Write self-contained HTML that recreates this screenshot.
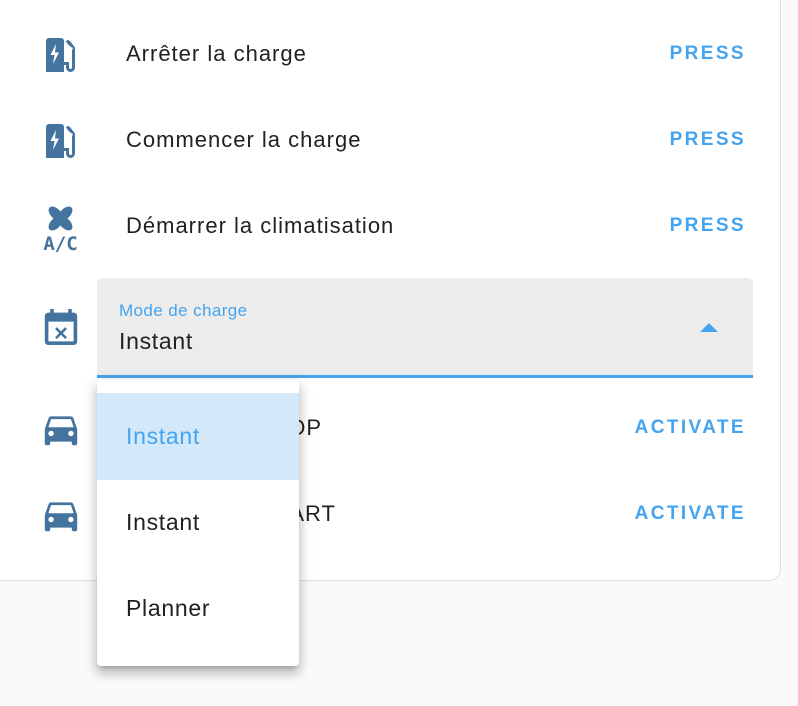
<!DOCTYPE html>
<html><head><meta charset="utf-8"><style>
*{margin:0;padding:0;box-sizing:border-box}
body{width:798px;height:706px;background:#fafafa;font-family:"Liberation Sans",sans-serif;position:relative;overflow:hidden}
.card{position:absolute;left:-20px;top:-20px;width:801px;height:601px;background:#fff;border:1px solid #e0e0e0;border-radius:12px}
.ic{position:absolute;left:43px;width:36px;height:36px;overflow:visible}
.lbl{position:absolute;left:126px;font-size:22px;color:#212121;line-height:24px;letter-spacing:1px}
.btn{position:absolute right:52px;font-size:19px;color:#45a4ef;letter-spacing:2.4px;font-weight:bold;line-height:24px}
.btn{position:absolute;right:52px}
.sel{position:absolute;left:97px;top:278px;width:656px;height:100px;background:#ececec;border-radius:6px 6px 0 0;border-bottom:3px solid #45a4ef}
.menu{position:absolute;left:97px;top:380px;width:202px;height:286px;background:#fff;border-radius:4px;box-shadow:0 5px 5px -3px rgba(0,0,0,.2),0 8px 10px 1px rgba(0,0,0,.14),0 3px 14px 2px rgba(0,0,0,.12)}
.it{position:absolute;left:0;width:202px;height:87px;padding-left:29px;font-size:23px;line-height:87px;color:#212121;letter-spacing:.7px}
</style></head><body>
<div class="card"></div>
<svg class="ic" style="top:36px" viewBox="0 0 36 36" fill="#44739e"><path d="M3 5a3 3 0 013-3h12a3 3 0 013 3v31H3z"/><path d="M13 8L7.5 19H11.5L10 28L16 16.5H12z" fill="#fff"/><path d="M21 27.5h3.5v4a3 3 0 006 0V12l-5-6.5" fill="none" stroke="#44739e" stroke-width="3"/><path d="M24 4.5l3.5 4.5" stroke="#44739e" stroke-width="3"/><circle cx="28.5" cy="12.5" r="1.3" fill="#fff"/></svg>
<div class="lbl" style="top:42px">Arrêter la charge</div><div class="btn" style="top:42px;font-size:19px;color:#45a4ef;letter-spacing:2.4px;font-weight:bold;line-height:24px">PRESS</div>
<svg class="ic" style="top:122px" viewBox="0 0 36 36" fill="#44739e"><path d="M3 5a3 3 0 013-3h12a3 3 0 013 3v31H3z"/><path d="M13 8L7.5 19H11.5L10 28L16 16.5H12z" fill="#fff"/><path d="M21 27.5h3.5v4a3 3 0 006 0V12l-5-6.5" fill="none" stroke="#44739e" stroke-width="3"/><path d="M24 4.5l3.5 4.5" stroke="#44739e" stroke-width="3"/><circle cx="28.5" cy="12.5" r="1.3" fill="#fff"/></svg>
<div class="lbl" style="top:128px">Commencer la charge</div><div class="btn" style="top:128px;font-size:19px;color:#45a4ef;letter-spacing:2.4px;font-weight:bold;line-height:24px">PRESS</div>
<svg class="ic" style="top:204px;height:48px" viewBox="0 0 36 48" fill="#44739e"><g transform="translate(17.5 14.5)"><ellipse rx="5" ry="8.5" transform="rotate(45) translate(0 -7)"/><ellipse rx="5" ry="8.5" transform="rotate(135) translate(0 -7)"/><ellipse rx="5" ry="8.5" transform="rotate(225) translate(0 -7)"/><ellipse rx="5" ry="8.5" transform="rotate(315) translate(0 -7)"/></g><text x="17.5" y="46" font-size="19" font-weight="bold" text-anchor="middle" font-family="DejaVu Sans Mono,monospace" fill="#44739e">A/C</text></svg>
<div class="lbl" style="top:214px">Démarrer la climatisation</div><div class="btn" style="top:214px;font-size:19px;color:#45a4ef;letter-spacing:2.4px;font-weight:bold;line-height:24px">PRESS</div>
<svg class="ic" style="top:309px" viewBox="2 2 20 20" fill="#44739e"><path d="M19 4h-1V2h-2v2H8V2H6v2H5a2 2 0 00-2 2v14a2 2 0 002 2h14a2 2 0 002-2V6a2 2 0 00-2-2zm0 16H5V9h14z"/><path d="M9.3 18.7L8.3 17.7 10.6 15.4 8.3 13.1 9.3 12.1 11.6 14.4 13.9 12.1 14.9 13.1 12.6 15.4 14.9 17.7 13.9 18.7 11.6 16.4z" transform="translate(.4 0)"/></svg>
<div class="sel"><div style="position:absolute;left:22px;top:23px;font-size:17px;color:#45a4ef;letter-spacing:.4px">Mode de charge</div><div style="position:absolute;left:22px;top:50px;font-size:23px;color:#212121;letter-spacing:.7px">Instant</div><div style="position:absolute;left:603px;top:45px;width:0;height:0;border-left:9px solid transparent;border-right:9px solid transparent;border-bottom:9px solid #45a4ef"></div></div>
<svg class="ic" style="top:411px" viewBox="2 2 20 20" fill="#44739e"><path d="M18.9 6c-.2-.6-.8-1-1.4-1h-11c-.7 0-1.2.4-1.4 1L3 12v8a1 1 0 001 1h1a1 1 0 001-1v-1h12v1a1 1 0 001 1h1a1 1 0 001-1v-8zM6.5 16A1.5 1.5 0 118 14.5 1.5 1.5 0 016.5 16zm11 0a1.5 1.5 0 111.5-1.5 1.5 1.5 0 01-1.5 1.5zM5 11l1.5-4.5h11L19 11z"/></svg>
<div class="lbl" style="top:416px;left:auto;right:476px">Charge STOP</div><div class="btn" style="top:416px;font-size:19px;color:#45a4ef;letter-spacing:2.4px;font-weight:bold;line-height:24px">ACTIVATE</div>
<svg class="ic" style="top:497px" viewBox="2 2 20 20" fill="#44739e"><path d="M18.9 6c-.2-.6-.8-1-1.4-1h-11c-.7 0-1.2.4-1.4 1L3 12v8a1 1 0 001 1h1a1 1 0 001-1v-1h12v1a1 1 0 001 1h1a1 1 0 001-1v-8zM6.5 16A1.5 1.5 0 118 14.5 1.5 1.5 0 016.5 16zm11 0a1.5 1.5 0 111.5-1.5 1.5 1.5 0 01-1.5 1.5zM5 11l1.5-4.5h11L19 11z"/></svg>
<div class="lbl" style="top:502px;left:auto;right:462px">Charge START</div><div class="btn" style="top:502px;font-size:19px;color:#45a4ef;letter-spacing:2.4px;font-weight:bold;line-height:24px">ACTIVATE</div>
<div class="menu">
<div class="it" style="top:13px;background:#d3e8f9;color:#45a4ef">Instant</div>
<div class="it" style="top:99px">Instant</div>
<div class="it" style="top:185px">Planner</div>
</div>
</body></html>
